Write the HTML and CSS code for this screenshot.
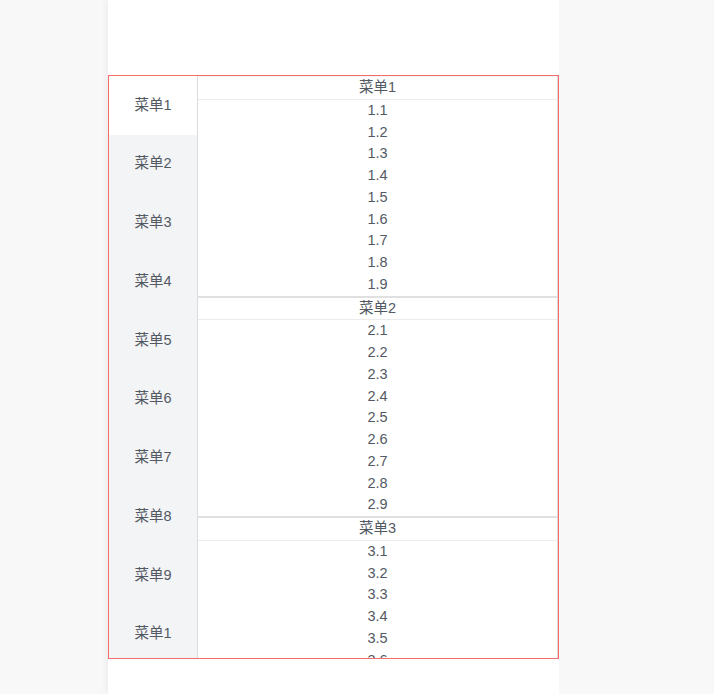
FILE: index.html
```html
<!DOCTYPE html>
<html lang="zh-CN">
<head>
    <meta charset="UTF-8">
    <meta name="viewport" content="width=device-width, initial-scale=1.0">
    <title>分类菜单</title>
    <link rel="stylesheet" href="styles.css">
</head>
<body>
    <div class="page">
        <div class="menu-box">
            <!-- 左侧分类 -->
            <ul class="side-menu">
                <li class="side-item active">菜单1</li>
                <li class="side-item">菜单2</li>
                <li class="side-item">菜单3</li>
                <li class="side-item">菜单4</li>
                <li class="side-item">菜单5</li>
                <li class="side-item">菜单6</li>
                <li class="side-item">菜单7</li>
                <li class="side-item">菜单8</li>
                <li class="side-item">菜单9</li>
                <li class="side-item">菜单1</li>
            </ul>

            <!-- 右侧内容 -->
            <div class="content">
                <section class="group">
                    <h3 class="group-title">菜单1</h3>
                    <ul class="group-list">
                        <li>1.1</li><li>1.2</li><li>1.3</li><li>1.4</li><li>1.5</li>
                        <li>1.6</li><li>1.7</li><li>1.8</li><li>1.9</li>
                    </ul>
                </section>
                <section class="group">
                    <h3 class="group-title">菜单2</h3>
                    <ul class="group-list">
                        <li>2.1</li><li>2.2</li><li>2.3</li><li>2.4</li><li>2.5</li>
                        <li>2.6</li><li>2.7</li><li>2.8</li><li>2.9</li>
                    </ul>
                </section>
                <section class="group">
                    <h3 class="group-title">菜单3</h3>
                    <ul class="group-list">
                        <li>3.1</li><li>3.2</li><li>3.3</li><li>3.4</li><li>3.5</li>
                        <li>3.6</li>
                    </ul>
                </section>
            </div>
        </div>
    </div>
</body>
</html>
```

FILE: styles.css
```css
/* Base */
* {
    margin: 0;
    padding: 0;
    box-sizing: border-box;
}

:root {
    --text: #535963;
    --side-bg: #f3f4f6;
    --line: #e0e0e0;
    --line-light: #ebebeb;
    --red: #f56c6c;
}

html, body {
    height: 100%;
}

body {
    background: #f8f8f8;
    font-family: 'Liberation Sans', 'Noto Sans CJK SC', sans-serif;
    font-size: 14.5px;
    line-height: 1.5;
    color: var(--text);
    overflow: hidden;
}

ul {
    list-style: none;
}

/* Page column */
.page {
    width: 451px;
    height: 100%;
    margin-left: 108px;
    padding-top: 75px;
    background: #fff;
    box-shadow: -3px 0 5px rgba(0, 0, 0, 0.04);
}

/* Menu box */
.menu-box {
    display: flex;
    height: 584px;
    border: 1px solid var(--red);
    overflow: hidden;
}

.side-menu {
    width: 89px;
    flex-shrink: 0;
    background: var(--side-bg);
    border-right: 1px solid #dcdcdc;
    overflow: hidden;
}

.side-item {
    padding: 18.5px 0;
    text-align: center;
}

.side-item.active {
    background: #fff;
}

.content {
    flex: 1;
    overflow: hidden;
    border-right: 1px solid #e0d6d6;
    text-align: center;
}

.group-title {
    font-size: inherit;
    font-weight: normal;
    border-top: 2px solid var(--line);
    border-bottom: 1px solid var(--line-light);
}

.group:first-child .group-title {
    border-top-width: 1px;
    border-top-color: #f3f3f3;
}
```
